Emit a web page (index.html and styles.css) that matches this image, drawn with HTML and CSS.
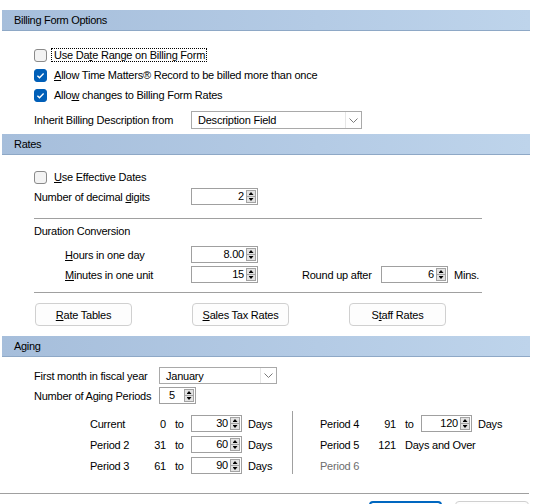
FILE: index.html
```html
<!DOCTYPE html>
<html lang="en">
  <head>
    <meta charset="UTF-8" />
    <title>Billing Options</title>
    <link rel="stylesheet" href="styles.css">
  </head>
  <body>
    <!-- Billing Form Options -->
    <div class="sec-head">Billing Form Options</div>
    <div class="sec-body billing">
      <div class="check-row">
        <span class="box"></span>
        <span class="lbl focus">Use Da<u>t</u>e Range on Billing Form</span>
      </div>
      <div class="check-row">
        <span class="box on"><svg width="13" height="13" viewBox="0 0 13 13"><polyline points="3.4,6.7 5.5,8.8 9.6,4.5" /></svg></span>
        <span class="lbl"><u>A</u>llow Time Matters® Record to be billed more than once</span>
      </div>
      <div class="check-row">
        <span class="box on"><svg width="13" height="13" viewBox="0 0 13 13"><polyline points="3.4,6.7 5.5,8.8 9.6,4.5" /></svg></span>
        <span class="lbl">Allo<u>w</u> changes to Billing Form Rates</span>
      </div>
      <div class="field-row inherit">
        <span class="field-lbl">Inherit Billing Description from</span>
        <div class="select desc">
          <span class="select-text">Description Field</span>
          <span class="select-arrow"><svg width="9" height="5" viewBox="0 0 9 5"><polyline points="0.5,0.5 4.5,4.5 8.5,0.5" /></svg></span>
        </div>
      </div>
    </div>

    <!-- Rates -->
    <div class="sec-head">Rates</div>
    <div class="sec-body rates">
      <div class="check-row">
        <span class="box"></span>
        <span class="lbl"><u>U</u>se Effective Dates</span>
      </div>
      <div class="field-row digits">
        <span class="field-lbl">Number of decimal <u>d</u>igits</span>
        <div class="spin w67"><span class="spin-val">2</span><span class="spin-btn"><i class="up"></i><i class="dn"></i></span></div>
      </div>
      <div class="rule"></div>
      <div class="sub-title">Duration Conversion</div>
      <div class="field-row indent hours">
        <span class="field-lbl"><u>H</u>ours in one day</span>
        <div class="spin w67"><span class="spin-val">8.00</span><span class="spin-btn"><i class="up"></i><i class="dn"></i></span></div>
      </div>
      <div class="field-row indent minutes">
        <span class="field-lbl"><u>M</u>inutes in one unit</span>
        <div class="spin w67"><span class="spin-val">15</span><span class="spin-btn"><i class="up"></i><i class="dn"></i></span></div>
        <span class="round-lbl">Round up after</span>
        <div class="spin w67"><span class="spin-val">6</span><span class="spin-btn"><i class="up"></i><i class="dn"></i></span></div>
        <span class="mins">Mins.</span>
      </div>
      <div class="rule"></div>
      <div class="btn-row">
        <button class="btn"><u>R</u>ate Tables</button>
        <button class="btn"><u>S</u>ales Tax Rates</button>
        <button class="btn">S<u>t</u>aff Rates</button>
      </div>
    </div>

    <!-- Aging -->
    <div class="sec-head">Aging</div>
    <div class="sec-body aging">
      <div class="field-row month">
        <span class="field-lbl">First month in fiscal year</span>
        <div class="select month-sel">
          <span class="select-text">January</span>
          <span class="select-arrow"><svg width="9" height="5" viewBox="0 0 9 5"><polyline points="0.5,0.5 4.5,4.5 8.5,0.5" /></svg></span>
        </div>
      </div>
      <div class="field-row count">
        <span class="field-lbl">Number of Aging Periods</span>
        <div class="spin w37 center"><span class="spin-val">5</span><span class="spin-btn"><i class="up"></i><i class="dn"></i></span></div>
      </div>

      <div class="periods">
        <div class="period-col">
          <div class="period-row">
            <span class="p-lbl">Current</span><span class="p-num">0</span><span class="p-to">to</span>
            <div class="spin w51"><span class="spin-val">30</span><span class="spin-btn"><i class="up"></i><i class="dn"></i></span></div>
            <span class="p-days">Days</span>
          </div>
          <div class="period-row">
            <span class="p-lbl">Period 2</span><span class="p-num">31</span><span class="p-to">to</span>
            <div class="spin w51"><span class="spin-val">60</span><span class="spin-btn"><i class="up"></i><i class="dn"></i></span></div>
            <span class="p-days">Days</span>
          </div>
          <div class="period-row">
            <span class="p-lbl">Period 3</span><span class="p-num">61</span><span class="p-to">to</span>
            <div class="spin w51"><span class="spin-val">90</span><span class="spin-btn"><i class="up"></i><i class="dn"></i></span></div>
            <span class="p-days">Days</span>
          </div>
        </div>
        <div class="period-sep"></div>
        <div class="period-col second">
          <div class="period-row">
            <span class="p-lbl">Period 4</span><span class="p-num">91</span><span class="p-to">to</span>
            <div class="spin w51"><span class="spin-val">120</span><span class="spin-btn"><i class="up"></i><i class="dn"></i></span></div>
            <span class="p-days">Days</span>
          </div>
          <div class="period-row">
            <span class="p-lbl">Period 5</span><span class="p-num">121</span><span class="p-over">Days and Over</span>
          </div>
          <div class="period-row">
            <span class="p-lbl disabled">Period 6</span>
          </div>
        </div>
      </div>
    </div>

    <!-- Dialog footer, cut off by the window -->
    <div class="bottom-rule"></div>
    <div class="dlg-buttons">
      <button class="dlg-btn default"></button>
      <button class="dlg-btn"></button>
    </div>
  </body>
</html>
```
FILE: styles.css
```css
/* Base */
* {
  box-sizing: border-box;
}

html {
  overflow: hidden;
}

body {
  margin: 0;
  padding-top: 10px;
  background: #ffffff;
  color: #000000;
  font-family: "Liberation Sans", Arial, sans-serif;
  font-size: 11px;
  letter-spacing: -0.22px;
}

u {
  text-decoration: underline;
  text-underline-offset: 1px;
}

/* Section header bars */
.sec-head {
  width: 528px;
  height: 21px;
  margin-left: 2px;
  padding-left: 12px;
  line-height: 20px;
  letter-spacing: -0.3px;
  background: linear-gradient(to right, #a6bedb, #b4cbe5 60%, #bed4eb);
  border-bottom: 1px solid #8ea8c6;
}

.sec-body {
  padding-left: 34px;
}

.billing {
  padding-top: 14px;
  padding-bottom: 5px;
}

.rates {
  padding-top: 12px;
  padding-bottom: 10px;
}

.aging {
  padding-top: 10px;
  padding-bottom: 19px;
}

/* Checkboxes */
.check-row {
  display: flex;
  align-items: center;
  height: 20px;
}

.box {
  width: 13px;
  height: 13px;
  border: 1px solid #8a8a8a;
  border-radius: 3px;
  background: #f3f3f3;
}

.box.on {
  border-color: #005fb8;
  background: #005fb8;
}

.box svg {
  display: block;
  margin: -1px;
}

.box polyline {
  fill: none;
  stroke: #ffffff;
  stroke-width: 1.3;
}

.lbl {
  margin-left: 7px;
}

.lbl.focus {
  margin-left: 4px;
  padding: 0 1px 0 2px;
  border: 1px dotted #000000;
  line-height: 12px;
}

/* Label + control rows */
.field-row {
  display: flex;
  align-items: center;
  height: 17px;
}

.field-lbl {
  width: 157px;
}

.inherit {
  height: 18px;
  margin-top: 6px;
}

.digits {
  margin-top: 1px;
}

.indent {
  padding-left: 31px;
}

.indent .field-lbl {
  width: 126px;
}

.hours {
  margin-top: 6px;
}

.minutes {
  margin-top: 3px;
}

.round-lbl {
  margin-left: 44px;
  width: 79px;
}

.mins {
  margin-left: 6px;
}

.month .field-lbl,
.count .field-lbl {
  width: 125px;
}

.count {
  margin-top: 3px;
}

.sub-title {
  height: 18px;
  line-height: 18px;
  margin-top: 3px;
}

.rule {
  width: 448px;
  height: 1px;
  margin-top: 13px;
  background: #a0a0a0;
}

.minutes + .rule {
  margin-top: 9px;
}

/* Dropdowns */
.select {
  display: flex;
  align-items: center;
  height: 100%;
  border: 1px solid #a9a9a9;
  background: #ffffff;
}

.select.desc {
  width: 171px;
}

.select.month-sel {
  width: 118px;
}

.select-text {
  flex: 1;
  padding-left: 6px;
}

.select-arrow {
  display: flex;
  align-items: center;
  justify-content: center;
  width: 16px;
  height: 100%;
  border-left: 1px solid #e6e6e6;
}

.select-arrow polyline {
  fill: none;
  stroke: #7a7a7a;
  stroke-width: 1;
}

/* Spin boxes */
.spin {
  display: flex;
  height: 17px;
  border: 1px solid #a0a0a0;
  background: #ffffff;
}

.w67 {
  width: 67px;
}

.w51 {
  width: 51px;
}

.w37 {
  width: 37px;
}

.spin-val {
  flex: 1;
  text-align: right;
  padding-right: 2px;
  line-height: 15px;
}

.spin.center .spin-val {
  text-align: center;
  padding-left: 2px;
}

.spin-btn {
  display: flex;
  flex-direction: column;
  width: 10px;
  margin: 1px 1px 1px 0;
  border: 1px solid #a3a3a3;
  background: #e3e3e3;
}

.spin-btn i {
  flex: 1;
  display: flex;
  align-items: center;
  justify-content: center;
}

.spin-btn i.up {
  border-bottom: 1px solid #a3a3a3;
}

.spin-btn i::before {
  content: "";
  width: 5px;
  height: 3px;
  background: #000000;
}

.spin-btn i.up::before {
  clip-path: polygon(50% 0, 100% 100%, 0 100%);
}

.spin-btn i.dn::before {
  clip-path: polygon(0 0, 100% 0, 50% 100%);
}

/* Buttons */
.btn-row {
  display: flex;
  gap: 60px;
  margin-top: 10px;
  padding-left: 1px;
}

.btn {
  width: 97px;
  height: 23px;
  padding: 0;
  font: inherit;
  letter-spacing: inherit;
  color: #000000;
  background: #fdfdfd;
  border: 1px solid #d0d0d0;
  border-radius: 4px;
}

/* Aging periods */
.periods {
  display: flex;
  margin-top: 11px;
  padding-left: 56px;
}

.period-col {
  display: flex;
  flex-direction: column;
  gap: 4px;
  width: 202px;
}

.period-col.second {
  padding-left: 27px;
  width: auto;
}

.period-sep {
  width: 1px;
  margin-top: -4px;
  background: #a0a0a0;
}

.period-row {
  display: flex;
  align-items: center;
  height: 17px;
}

.p-lbl {
  width: 52px;
}

.p-lbl.disabled {
  color: #6d6d6d;
}

.p-num {
  width: 24px;
  text-align: right;
}

.p-to {
  width: 25px;
  padding-left: 9px;
}

.p-days {
  margin-left: 6px;
}

.p-over {
  padding-left: 9px;
}

/* Dialog footer */
.bottom-rule {
  width: 529px;
  height: 1px;
  background: #a0a0a0;
}

.dlg-buttons {
  display: flex;
  gap: 13px;
  margin-top: 7px;
  padding-left: 369px;
}

.dlg-btn {
  width: 74px;
  height: 23px;
  background: #fdfdfd;
  border: 1px solid #d0d0d0;
  border-radius: 4px;
}

.dlg-btn.default {
  width: 73px;
  border: 2px solid #0067c0;
}
```
